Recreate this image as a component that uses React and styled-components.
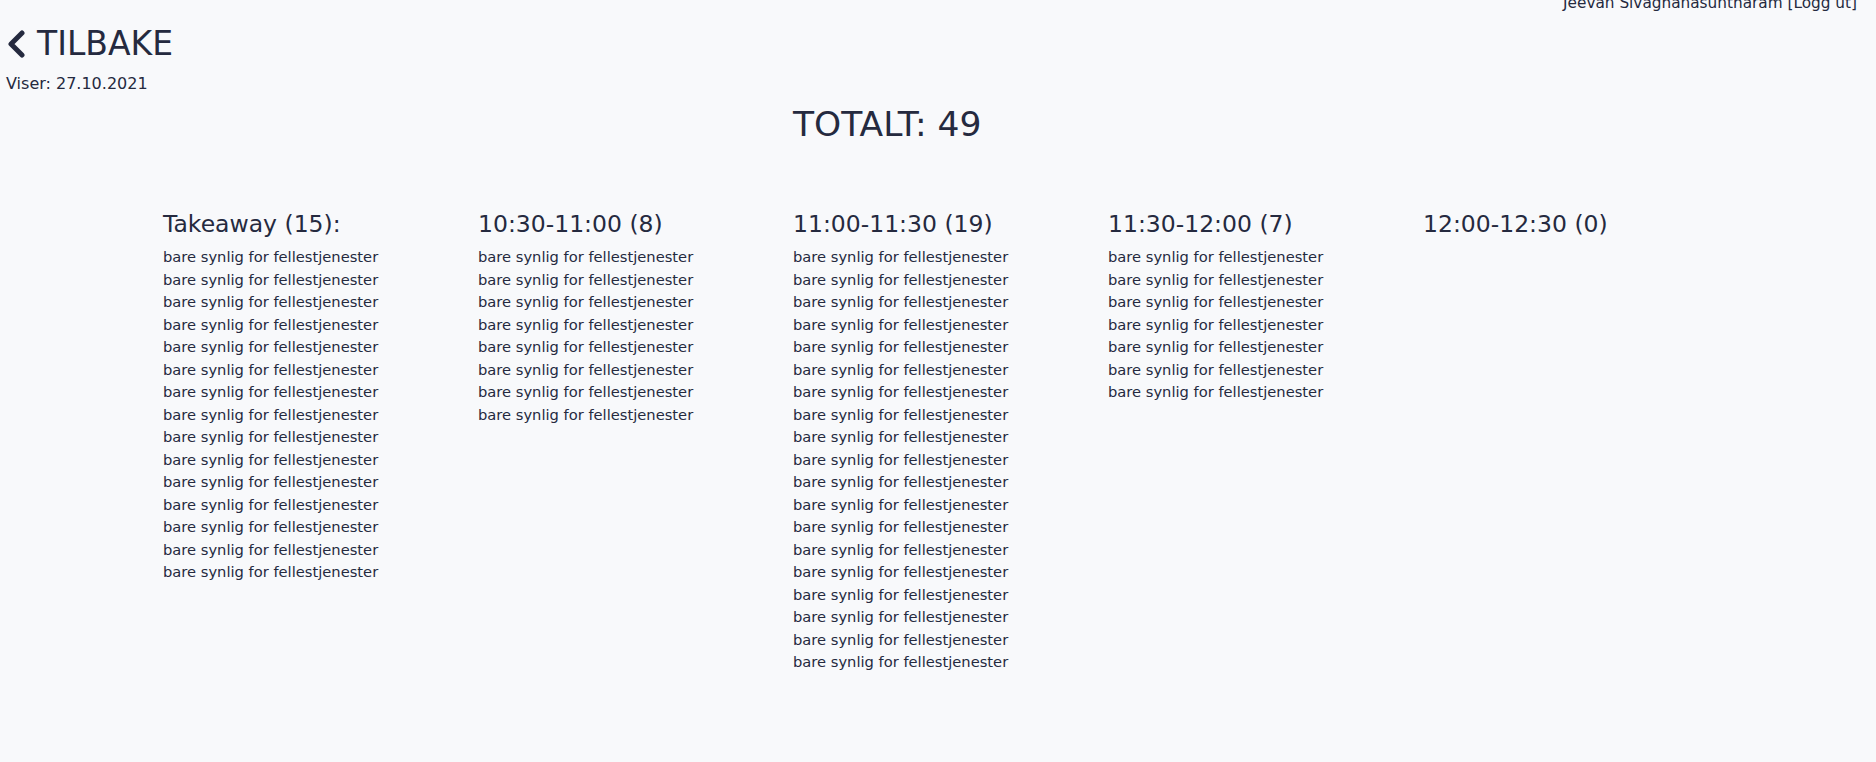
import React from "react";
import styled, { createGlobalStyle } from "styled-components";

const GlobalStyle = createGlobalStyle`
  body {
    margin: 0;
    background: #f8f9fb;
    color: #252a3f;
    font-family: "DejaVu Sans", "Liberation Sans", sans-serif;
  }
`;

const slots = [
  { title: "Takeaway (15):", count: 15 },
  { title: "10:30-11:00 (8)", count: 8 },
  { title: "11:00-11:30 (19)", count: 19 },
  { title: "11:30-12:00 (7)", count: 7 },
  { title: "12:00-12:30 (0)", count: 0 },
];

const ChevronLeft = () => (
  <svg width="20" height="28" viewBox="0 0 20 28">
    <polyline
      points="16,3 5,14 16,25"
      fill="none"
      stroke="#252a3f"
      strokeWidth="5"
      strokeLinecap="round"
      strokeLinejoin="round"
    />
  </svg>
);

export default function App() {
  return (
    <>
      <GlobalStyle />
      <Page>
        <User>Jeevan Sivaghanasuntharam [Logg ut]</User>
        <BackLink>
          <ChevronLeft />
          <span>TILBAKE</span>
        </BackLink>
        <DateLine>Viser: 27.10.2021</DateLine>
        <Grid>
          <Total>TOTALT: 49</Total>
        </Grid>
        <Columns>
          {slots.map((slot) => (
            <Column key={slot.title}>
              <Heading>{slot.title}</Heading>
              {Array.from({ length: slot.count }).map((_, i) => (
                <Entry key={i}>bare synlig for fellestjenester</Entry>
              ))}
            </Column>
          ))}
        </Columns>
      </Page>
    </>
  );
}

const Page = styled.div`
  position: relative;
  min-height: 762px;
  padding-top: 24px;
  box-sizing: border-box;
`;

const User = styled.div`
  position: absolute;
  top: -8px;
  right: 19px;
  font-size: 15.3px;
  line-height: 22.5px;
  cursor: pointer;
`;

const BackLink = styled.div`
  display: flex;
  align-items: center;
  gap: 11px;
  padding-left: 6px;
  height: 40px;
  font-size: 33px;
  line-height: 40px;
  cursor: pointer;

  svg {
    flex-shrink: 0;
  }
`;

const DateLine = styled.div`
  margin-top: 8px;
  padding-left: 6px;
  font-size: 16px;
  line-height: 24px;
`;

const Grid = styled.div`
  display: grid;
  grid-template-columns: repeat(5, 315px);
  padding-left: 163px;
  margin-top: 8px;
`;

const Total = styled.h1`
  grid-column: 3 / 5;
  margin: 0;
  font-size: 34.5px;
  font-weight: 400;
  line-height: 40px;
`;

const Columns = styled(Grid)`
  margin-top: 66px;
  align-items: start;
`;

const Column = styled.div`
  display: flex;
  flex-direction: column;
`;

const Heading = styled.h2`
  margin: 0 0 8px;
  font-size: 23.5px;
  font-weight: 400;
  line-height: 28px;
`;

const Entry = styled.div`
  font-size: 14.7px;
  line-height: 22.5px;
`;
